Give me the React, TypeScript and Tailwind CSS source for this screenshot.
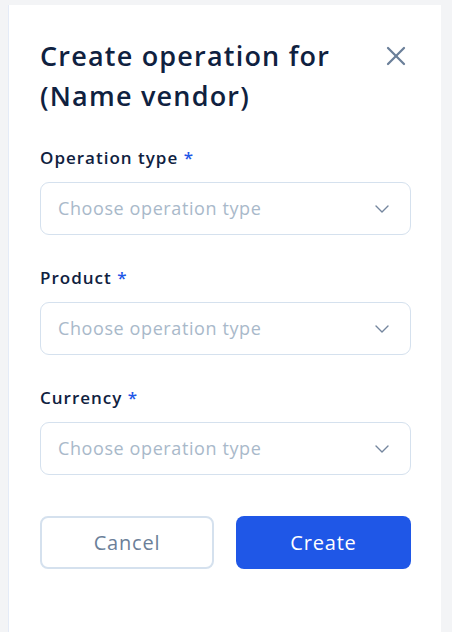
import { ChevronDown, X } from 'lucide-react';

const fields = [
  { label: 'Operation type', placeholder: 'Choose operation type' },
  { label: 'Product', placeholder: 'Choose operation type' },
  { label: 'Currency', placeholder: 'Choose operation type' },
];

export default function App() {
  return (
    <div
      className="min-h-screen bg-[#f3f4f6] pt-[5px] pl-[8px] pr-[11px]"
      style={{ fontFamily: '"Open Sans", sans-serif' }}
    >
      <div className="min-h-[627px] border-l border-[#e4ebf7] bg-white pr-[30px] pl-[31px] pt-[31px]">
        {/* Header */}
        <div className="flex items-start justify-between">
          <h1 className="text-[27px] leading-[40px] font-semibold tracking-[1.2px] text-[#0f2140]">
            Create operation for
            <br />
            (Name vendor)
          </h1>
          <button type="button" className="mt-[4px] -mr-[1px] text-[#6b7f99]">
            <X className="h-[32px] w-[32px]" strokeWidth={1.7} />
          </button>
        </div>

        {/* Fields */}
        <div className="mt-[31px] flex flex-col gap-[32px]">
          {fields.map(field => (
            <div key={field.label}>
              <label className="block text-[17px] leading-[22px] font-semibold tracking-[1px] text-[#0f2140]">
                {field.label}
                {' '}
                <span className="text-[#1f57e7]">*</span>
              </label>
              <button
                type="button"
                className="mt-[13px] flex h-[53px] w-full items-center justify-between rounded-[9px] border border-[#d5e1ee] pr-[16px] pl-[17px] text-left"
              >
                <span className="text-[18px] tracking-[0.6px] text-[#a9b9ca]">{field.placeholder}</span>
                <ChevronDown className="h-[24px] w-[24px] text-[#74869e]" strokeWidth={1.4} />
              </button>
            </div>
          ))}
        </div>

        {/* Actions */}
        <div className="mt-[41px] flex justify-between">
          <button
            type="button"
            className="h-[53px] w-[174px] rounded-[8px] border-2 border-[#d5e1ee] bg-white text-[20px] font-medium tracking-[0.8px] text-[#6b7f99]"
          >
            Cancel
          </button>
          <button
            type="button"
            className="h-[53px] w-[175px] rounded-[8px] bg-[#1f57e7] text-[20px] font-medium tracking-[0.8px] text-white"
          >
            Create
          </button>
        </div>
      </div>
    </div>
  );
}
